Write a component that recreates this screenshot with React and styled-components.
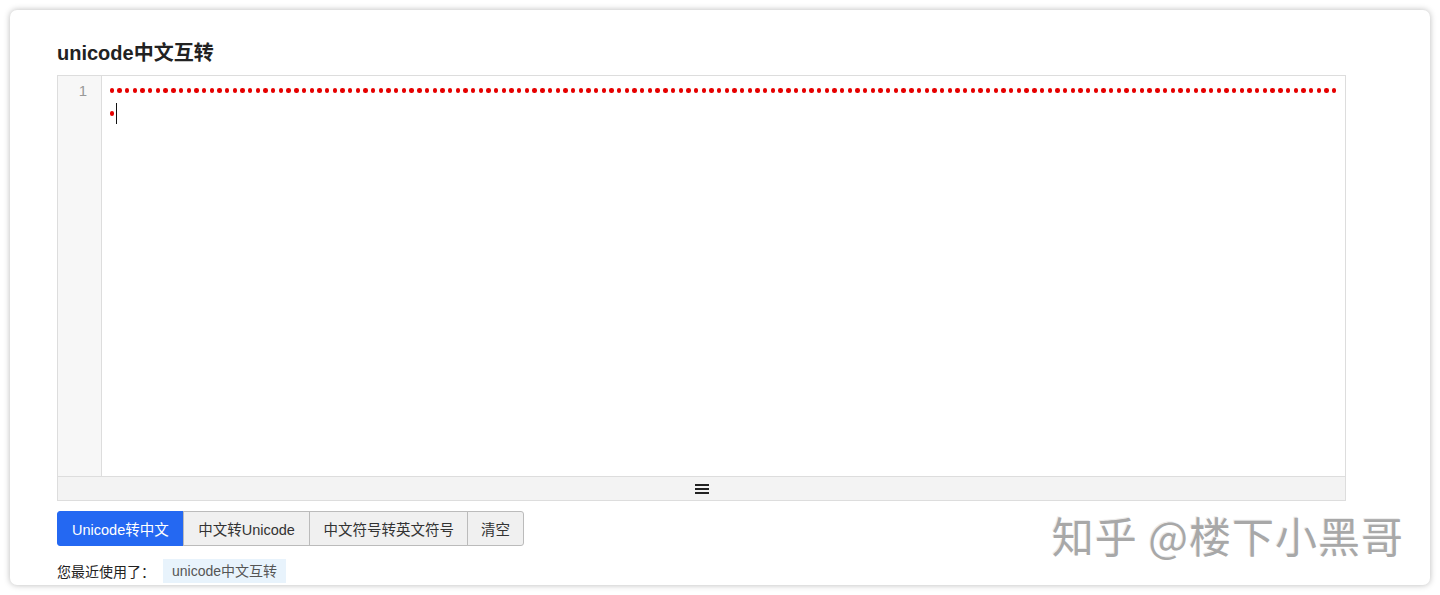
import React from "react";
import styled, { createGlobalStyle } from "styled-components";

const Global = createGlobalStyle`
  html, body { margin: 0; padding: 0; background: #fff; }
  body { font-family: "Liberation Sans", "Noto Sans CJK SC", sans-serif; color: #333; }
`;

const Card = styled.div`
  position: relative;
  margin: 10px;
  height: 575px;
  box-sizing: border-box;
  background: #fff;
  border-radius: 7px;
  box-shadow: 0 0 6px rgba(0, 0, 0, 0.28);
  padding: 30px 84px 0 47px;
  overflow: hidden;
`;

const Title = styled.h2`
  margin: 0 0 9px;
  font-size: 20px;
  font-weight: bold;
  line-height: 26px;
  color: #222;
`;

const Editor = styled.div`
  border: 1px solid #ddd;
  height: 426px;
  display: flex;
  flex-direction: column;
  box-sizing: border-box;
`;

const Body = styled.div`
  flex: 1;
  display: flex;
  min-height: 0;
`;

const Gutter = styled.div`
  width: 44px;
  background: #f7f7f7;
  border-right: 1px solid #ddd;
  color: #999;
  font-size: 15px;
  text-align: right;
  padding: 3px 14px 0 0;
  box-sizing: border-box;
  line-height: 23px;
`;

const Content = styled.div`
  flex: 1;
  padding: 3px 6px 0 6px;
  display: flex;
  flex-wrap: wrap;
  align-content: flex-start;
`;

const DotCell = styled.span`
  width: 7.7px;
  height: 23px;
  display: inline-flex;
  align-items: center;
  justify-content: center;
  &::before {
    content: "";
    width: 4.4px;
    height: 4.4px;
    border-radius: 50%;
    background: #e60000;
  }
`;

const Cursor = styled.span`
  width: 1px;
  height: 21px;
  margin-top: 1px;
  background: #111;
`;

const ResizeBar = styled.div`
  height: 23px;
  background: #f3f3f3;
  border-top: 1px solid #ddd;
  display: flex;
  align-items: center;
  justify-content: center;
`;

const ButtonRow = styled.div`
  display: flex;
  margin-top: 10px;
`;

const Button = styled.button`
  height: 35px;
  padding: 0 ${(p) => p.$pad || 13}px;
  font-family: inherit;
  font-size: 14.5px;
  border: 1px solid ${(p) => (p.$primary ? "#2468f2" : "#bbb")};
  margin-left: ${(p) => (p.$first ? 0 : -1)}px;
  background: ${(p) => (p.$primary ? "#2468f2" : "#f0f0f0")};
  color: ${(p) => (p.$primary ? "#fff" : "#333")};
  border-radius: ${(p) => p.$radius || "0"};
  cursor: pointer;
`;

const Recent = styled.div`
  display: flex;
  align-items: center;
  margin-top: 13px;
  font-size: 14px;
  color: #222;
`;

const Tag = styled.span`
  margin-left: 8px;
  background: #e8f3fc;
  color: #555;
  padding: 0 9px;
  line-height: 24px;
  font-size: 14px;
`;

const Watermark = styled.div`
  position: absolute;
  right: 26px;
  top: 494px;
  font-size: 42px;
  letter-spacing: 1px;
  color: #a8a8a8;
  font-family: "Noto Sans CJK SC", sans-serif;
  font-weight: 400;
  text-shadow: 1px 1px 0 #fff, -1px -1px 0 #ececec;
`;

export default function App() {
  const dots = Array.from({ length: 161 });
  return (
    <>
      <Global />
      <Card>
        <Title>unicode中文互转</Title>
        <Editor>
          <Body>
            <Gutter>1</Gutter>
            <Content>
              {dots.map((_, i) => (
                <DotCell key={i} />
              ))}
              <Cursor />
            </Content>
          </Body>
          <ResizeBar>
            <svg width="14" height="12" viewBox="0 0 14 12">
              <rect x="0" y="1" width="14" height="2" fill="#222" />
              <rect x="0" y="5" width="14" height="2" fill="#222" />
              <rect x="0" y="9" width="14" height="2" fill="#222" />
            </svg>
          </ResizeBar>
        </Editor>
        <ButtonRow>
          <Button $primary $first $pad={14} $radius="3px 0 0 3px">Unicode转中文</Button>
          <Button $pad={14.5}>中文转Unicode</Button>
          <Button>中文符号转英文符号</Button>
          <Button $radius="0 3px 3px 0">清空</Button>
        </ButtonRow>
        <Recent>
          您最近使用了：
          <Tag>unicode中文互转</Tag>
        </Recent>
        <Watermark>知乎 @楼下小黑哥</Watermark>
      </Card>
    </>
  );
}
